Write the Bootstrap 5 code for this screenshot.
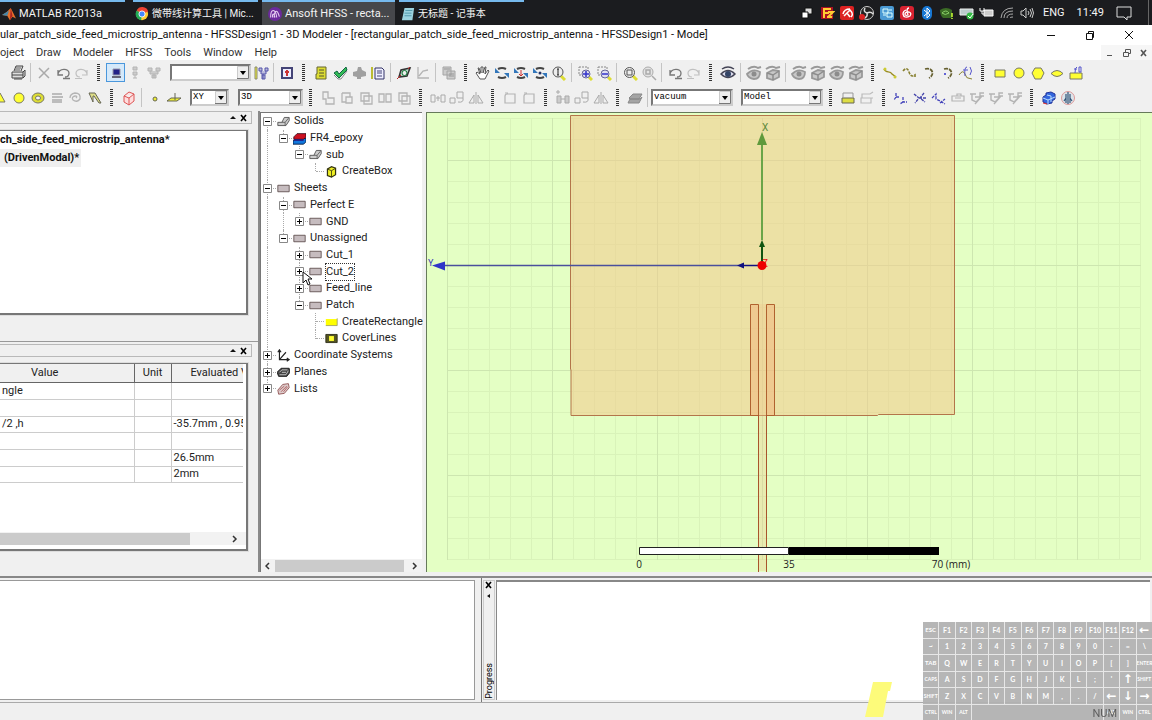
<!DOCTYPE html>
<html lang="en">
<head>
<meta charset="utf-8">
<meta name="viewport" content="width=device-width, initial-scale=1">
<title>Ansoft HFSS - 3D Modeler</title>
<link href="https://cdn.jsdelivr.net/npm/bootstrap@5.3.0/dist/css/bootstrap.min.css" rel="stylesheet">
<style>
body{font:11px/16px Roboto,"Noto Sans CJK SC",sans-serif;color:#222;background:#f0f0f0;overflow:hidden}
button{border:0;background:none;padding:0;color:inherit;font:inherit}
svg{display:block;flex:none}
.ic{width:16px;height:16px}
/* task bar */
.taskbar{height:25px;background:#1b1c1f;color:#f4f4f4}
.task{width:125px;height:25px;border-top:2px solid #76b9ed;padding-left:2px;text-align:left;gap:3px}
.task.wide{width:133px;background:#46474b;padding-left:6px}
.task .ic{width:14px;height:14px}
.task .cjk{font-size:10px}
.tray{gap:4px}
.edge{width:4px;height:25px;border-left:1px solid #666}
/* title and menus */
.titlebar,.menubar{background:#fff}
.titlebar{height:20px;color:#111}
.menubar{height:15px}
.menus{gap:12px}
.menubar a{color:#333;text-decoration:none}
.winctl{width:39px}
.mdi{width:17px;height:15px;background:#f6f6f6}
/* tool bars */
.bar{height:25px}
.bar-second{margin-left:-10px}
.tb{width:19px;height:19px;display:flex;align-items:center;justify-content:center;flex:none}
.tb.on{background:#d5e9fa;outline:1px solid #4a97dc;outline-offset:-1px}
.vsep{width:7px;height:19px;flex:none;background:linear-gradient(#c4c4c4,#c4c4c4) 3px 0/1px 100% no-repeat}
.grip{width:15px;height:18px;flex:none;background:repeating-linear-gradient(#333 0 1px,transparent 1px 2px) 6px 0/3px 100% no-repeat}
.combo{height:17px;font:9px/13px "Liberation Mono",monospace;color:#000;border:2px solid;border-color:#777 #ccc #ccc #777;border-radius:0;padding:0 14px 0 1px;appearance:none;flex:none;
background:#fff url("data:image/svg+xml,%3Csvg xmlns='http://www.w3.org/2000/svg' width='12' height='13'%3E%3Cpath d='M0 0h12v13H0z' fill='%23eee'/%3E%3Cpath d='M.5 13V.5H12' stroke='%23ccc' fill='none'/%3E%3Cpath d='M11.5 0v12.5H0' stroke='%23777' fill='none'/%3E%3Cpath d='M3 5h6l-3 4z'/%3E%3C/svg%3E") right 0 top 0 no-repeat}
.w-a{width:81px;margin:0 0 0 7px}.w-b{width:39px;margin:0 9px 0 7px}.w-c{width:65px}.w-d{width:82px;margin-right:8px}
/* docked panels */
.work{min-height:0;padding:1px 0 4px}
.dock{width:260px;border-right:2px solid #8a8a8a}
.dockhead{height:13px;width:252px;border:1px solid #b9b9b9;border-left:0;gap:4px;padding-right:3px}
.box{width:248px;background:#fff;border:2px solid #777;border-left:0;border-top-width:1px;outline:1px solid #ddd}
.proj{height:185px;margin-top:6px;font-weight:700;color:#111;line-height:18px}
.proj span{white-space:nowrap}
.drv{background:#efefef;padding:0 2px 0 4px;align-self:flex-start}
.dockline{border-bottom:1px solid #999;margin-bottom:2px}
.props{height:188px;margin-top:6px;margin-bottom:21px}
.ptable{table-layout:fixed;width:243px;border-collapse:collapse;line-height:14px}
.ptable td,.ptable th{padding:0 2px;border:1px solid #ccc;border-left:0;border-top:0;white-space:nowrap;overflow:hidden;font-weight:400}
.ptable td:last-child,.ptable th:last-child{border-right:0}
.ptable th{background:#f0f0f0;border-color:#666;text-align:center;height:18px}
.ptable th:first-child{padding-right:66px}
.ptable th.eh{text-align:left;padding-left:19px;padding-right:0}
.ptable td{height:17px}
.ptable tr:nth-child(3n) td{height:16px}
.ptable .first th:first-child{padding-left:22px}
.sbar{height:13px;background:#f2f2f2}
.thumb{height:12px;background:#cbcbcb}
.treepane{width:162px;background:#fff;border:solid #777;border-width:1px 0 0 1px;margin-top:1px}
.tree{height:284px;list-style:none;margin:0;padding:0}
.tree li{display:flex;align-items:center;min-height:0;white-space:nowrap}
.tree .ic{width:13px;height:13px;margin-right:4px}
.gd{width:16px;align-self:stretch;position:relative;flex:none}
.gd::before{content:"";position:absolute;left:6px;top:0;bottom:0;border-left:1px dotted #aaa}
.gd.no::before{display:none}
.gd.hf::before{bottom:50%}
.gd.lo::before{top:50%}
.gd.tee::after{content:"";position:absolute;left:7px;right:1px;top:8px;border-top:1px dotted #aaa}
.pm{position:absolute;left:2px;top:4px;z-index:1}
.pointer{position:absolute;left:9px;top:8px;z-index:3}
.sel{outline:1px dotted #333}
.view{border:solid #667a5a;border-width:1px 0 0 1px;margin:1px 0 0 4px;background:#e4ffc4}
.view svg{width:100%;height:100%}
/* lower panels */
.lower{height:127px;border-top:2px solid #888;border-bottom:1px solid #aaa}
.msg{width:475px;margin:2px 6px 2px 0;background:#fff;border:1px solid #999;border-left:0}
.pside{width:14px;margin-right:1px;border-left:1px solid #777;padding:2px 0 2px 1px}
.pside>div{border:1px solid #ccc}
.vtext{writing-mode:vertical-rl;transform:rotate(180deg);font-size:9px;line-height:11px;color:#000}
.prog{margin:2px 2px 2px 0;background:#fff;border:solid #888;border-width:2px 0 0 1px}
.statusbar{height:17px}
/* on-screen keyboard lies over the window */
.keys{position:fixed;right:0;bottom:0;width:229px;height:98px;display:grid;grid-template-columns:repeat(14,1fr);grid-template-rows:repeat(6,1fr);gap:1px;background:#e6e6e6;opacity:.94}
.keys button{background:#b2b2b2;color:#fff;font:700 7px/14px Lato,sans-serif;overflow:hidden;min-width:0}
.keys .xs{font-size:5px}
.keys .md{font-size:6px}
.keys .ar{font:700 12px/12px "DejaVu Sans",sans-serif}
.space{grid-column:span 8}
.flag{position:fixed;left:865px;bottom:3px}
.under{position:absolute;color:#555;right:35px;bottom:-2px}
</style>
</head>
<body class="vh-100 d-flex flex-column">

<svg width="0" height="0" class="position-absolute" aria-hidden="true">
<defs>
<symbol id="print" viewBox="0 0 16 16"><path d="M4 6l2-5h7l-2 5M2 7h11l2-2v6l-2 2H2zM2 10h11M13 7v6M4 14h8" fill="#ddd" stroke="#444"/><path d="M6 3h5M5 5h5" stroke="#666"/></symbol>
<symbol id="cut" viewBox="0 0 16 16"><path d="M3 3l10 10M13 3L3 13" stroke="#aaa" stroke-width="1.5"/></symbol>
<symbol id="undo" viewBox="0 0 16 16"><path d="M3 5v5h5M3 9c1-6 11-6 11-1 0 3-2 4-4 4M8 13.500h7" fill="none" stroke="#777" stroke-width="1.300"/></symbol>
<symbol id="redo" viewBox="0 0 16 16"><path d="M13 5v5H8M13 9C12 3 2 3 2 8c0 3 2 4 4 4M1 13.500h7" fill="none" stroke="#c0c0c0" stroke-width="1.200"/></symbol>
<symbol id="mon" viewBox="0 0 16 16"><path d="M5 4h7v6H5z" fill="#228" stroke="#99a"/><path d="M4 12h9" stroke="#667" stroke-width="2"/></symbol>
<symbol id="node" viewBox="0 0 16 16"><path d="M6 2h4v3H6zM6 7h4v3H6zM8 10v3M6 13h4" fill="#ccc" stroke="#b4b4b4"/></symbol>
<symbol id="nodes" viewBox="0 0 16 16"><path d="M2 3h4v3H2zM10 3h4v3h-4zM4 6v3h8V6M8 9v4M6 10h4v3H6z" fill="#ccc" stroke="#b4b4b4"/></symbol>
<symbol id="tune" viewBox="0 0 16 16"><path d="M2 2h2v12H2z" fill="#ee3" stroke="#887"/><path d="M6 3h3v3H6zM12 3h3v3h-3zM8 6v3h5V6M10 9v5M9 10h3v4H9z" fill="#bbd" stroke="#55a"/></symbol>
<symbol id="doc" viewBox="0 0 16 16"><path d="M3 3h10v10H3z" fill="#eef" stroke="#447" stroke-width="2"/><path d="M8 5v6M6 7h4" stroke="#c33" stroke-width="2"/></symbol>
<symbol id="list" viewBox="0 0 16 16"><path d="M4 2h9v12H3V9h1z" fill="#dd3" stroke="#663"/><path d="M6 5h5M6 8h5M6 11h5" stroke="#553"/></symbol>
<symbol id="ok" viewBox="0 0 16 16"><path d="M2 8l3-2 2 3 7-7 1 3-8 8z" fill="#3b5" stroke="#164"/><path d="M2 10l4 4h3l6-8" stroke="#888" fill="none"/></symbol>
<symbol id="club" viewBox="0 0 16 16"><path d="M7 2h3l1 3 4 2v4l-5 1v2H6v-2l-4-1V7l4-1z" fill="#a0a0a0"/></symbol>
<symbol id="rep" viewBox="0 0 16 16"><path d="M5 3h7l2 2v9H5z" fill="#eef" stroke="#336"/><path d="M2 2v12" stroke="#bb3" stroke-width="2"/><path d="M7 6h5M7 8h5M7 11h5" stroke="#447"/></symbol>
<symbol id="plate" viewBox="0 0 16 16"><path d="M3 12l2-7 9-2-3 8z" fill="#bdc" stroke="#333" stroke-width="1.500"/><circle cx="8.500" cy="8" r="2.500" fill="#eee" stroke="#173"/><path d="M1 14l4-4M12 4l2-2" stroke="#b22"/></symbol>
<symbol id="graph" viewBox="0 0 16 16"><path d="M3 2v11h11M4 11l4-5 5-1" fill="none" stroke="#b4b4b4" stroke-width="1.300"/></symbol>
<symbol id="copy" viewBox="0 0 16 16"><path d="M2 2h8v8H2zM6 6h8v8H6z" fill="#ccc" stroke="#a4a4a4"/><path d="M3 4h6M8 9h5M8 11h5" stroke="#999"/></symbol>
<symbol id="hand" viewBox="0 0 16 16"><path d="M5 14L1 8l1-1 3 2-2-6h1l2 5V2h2v6l2-6h1l-1 7 3-4 1 1-4 8z" fill="#fff" stroke="#555"/></symbol>
<symbol id="rot" viewBox="0 0 16 16"><path d="M4 4q4-2 8 0M12 12q-4 2-8 0" fill="none" stroke="#444" stroke-width="2.200"/><path d="M1 3v5h5zM15 13V8h-5z" fill="#37b"/></symbol>
<symbol id="rotx" viewBox="0 0 16 16"><use href="#rot"/><path d="M8 5v6M6 9l2 2 2-2" stroke="#c33" fill="none"/></symbol>
<symbol id="roty" viewBox="0 0 16 16"><use href="#rot"/><circle cx="8" cy="8" r="1.500" fill="#236"/></symbol>
<symbol id="zi" viewBox="0 0 16 16"><path d="M10 11l4 4" stroke="#dd3" stroke-width="3"/><circle cx="7" cy="7" r="5" fill="#eee" stroke="#555"/><path d="M7 4v6M6 4h2M6 10h2" stroke="#222"/></symbol>
<symbol id="zp" viewBox="0 0 16 16"><path d="M12 12l3 3" stroke="#dd3" stroke-width="3"/><path d="M2 2h9v8H2z" fill="none" stroke="#888" stroke-dasharray="2 1"/><circle cx="9" cy="9" r="4" fill="#dde" stroke="#669"/><path d="M9 6v6M6 9h6" stroke="#33c" stroke-width="1.500"/></symbol>
<symbol id="zm" viewBox="0 0 16 16"><path d="M12 12l3 3" stroke="#dd3" stroke-width="3"/><path d="M2 2h9v8H2z" fill="none" stroke="#888" stroke-dasharray="2 1"/><circle cx="9" cy="9" r="4" fill="#dde" stroke="#669"/><path d="M6 9h6" stroke="#33c" stroke-width="1.500"/></symbol>
<symbol id="zf" viewBox="0 0 16 16"><path d="M11 11l4 4" stroke="#dd3" stroke-width="3"/><circle cx="7.500" cy="7.500" r="5" fill="#eee" stroke="#555"/><path d="M5 5h5v5H5z" fill="none" stroke="#555"/></symbol>
<symbol id="zg" viewBox="0 0 16 16"><circle cx="7" cy="7" r="5" fill="#e4e4e4" stroke="#aaa"/><path d="M5 5h4v4H5zM11 11l4 4" fill="none" stroke="#aaa" stroke-width="1.500"/></symbol>
<symbol id="eye" viewBox="0 0 16 16"><path d="M2 4q6-4 12 0" fill="none" stroke="#445" stroke-width="1.500"/><path d="M1 9q7-7 14 0-7 7-14 0z" fill="#dde" stroke="#445" stroke-width="1.500"/><circle cx="8" cy="9" r="3" fill="#346"/></symbol>
<symbol id="eg" viewBox="0 0 16 16"><path d="M2 4q6-4 10-1l3-1" fill="none" stroke="#999" stroke-width="2"/><path d="M1 9q6-6 13-2 0 7-6 7-6-1-7-5z" fill="#c8c8c8" stroke="#999" stroke-width="1.800"/><circle cx="8" cy="9" r="2.500" fill="#8c8c8c"/></symbol>
<symbol id="ebox" viewBox="0 0 16 16"><path d="M1 4q6-4 10-1l4-1" fill="none" stroke="#999" stroke-width="2"/><path d="M2 8l6-3 6 1v6l-6 3-6-2z" fill="#c8c8c8" stroke="#999" stroke-width="1.800"/><path d="M2 8l6 2 6-4M8 10v5" stroke="#8c8c8c" fill="none" stroke-width="1.500"/></symbol>
<symbol id="ln" viewBox="0 0 16 16"><path d="M2 4c2 5 6 1 8 5l4 3" fill="none" stroke="#998c20" stroke-width="1.400"/><circle cx="3" cy="4" r="1.500" fill="#cc3"/><circle cx="13" cy="12" r="1.500" fill="#cc3"/></symbol>
<symbol id="sp" viewBox="0 0 16 16"><path d="M2 6q4-5 6 1t6 3v2" fill="none" stroke="#888030" stroke-width="1.600" stroke-dasharray="3 1"/></symbol>
<symbol id="arc" viewBox="0 0 16 16"><path d="M5 4c8-2 10 6 4 9" fill="none" stroke="#666030" stroke-width="1.800" stroke-dasharray="4 1"/></symbol>
<symbol id="arcd" viewBox="0 0 16 16"><use href="#arc"/><circle cx="6" cy="9" r="1" fill="#33c"/></symbol>
<symbol id="eq" viewBox="0 0 16 16"><path d="M1 10q4-6 6-1t3 4l4 1" fill="none" stroke="#888030"/><path d="M9 2q-3 0-2 9M5 5h5M12 2q3 4 0 8" fill="none" stroke="#55c"/></symbol>
<symbol id="rect" viewBox="0 0 16 16"><path d="M3 5h10v7H3z" fill="#ff3" stroke="#776"/></symbol>
<symbol id="circ" viewBox="0 0 16 16"><circle cx="8" cy="8" r="5" fill="#ff3" stroke="#776"/></symbol>
<symbol id="poly" viewBox="0 0 16 16"><path d="M5 3h6l3 5-3 6H5L2 8z" fill="#ff3" stroke="#776"/></symbol>
<symbol id="elli" viewBox="0 0 16 16"><path d="M2 8.500q6-6 12 0-6 6-12 0z" fill="#ff3" stroke="#776"/></symbol>
<symbol id="eqs" viewBox="0 0 16 16"><path d="M2 8h12v6H2z" fill="#ff3" stroke="#776"/><path d="M9 2q-2 0-2 6M6 4h3M11 2v5h2V2z" fill="none" stroke="#55c"/></symbol>
<symbol id="tri" viewBox="0 0 16 16"><path d="M8 3l5 9H3z" fill="#ff3" stroke="#776"/></symbol>
<symbol id="torus" viewBox="0 0 16 16"><ellipse cx="8" cy="8" rx="6" ry="5" fill="#dd3" stroke="#776"/><ellipse cx="8" cy="8" rx="2.500" ry="2" fill="#f4f4f4" stroke="#776"/></symbol>
<symbol id="helix" viewBox="0 0 16 16"><path d="M3 4h10M3 7h11M3 10h10M3 12h10" stroke="#aaa" stroke-width="1.500"/></symbol>
<symbol id="spir" viewBox="0 0 16 16"><path d="M8 8q2-2-1-2-4 1-2 4 4 3 7-1 1-6-5-6-5 1-5 5" fill="none" stroke="#b4b4b4" stroke-width="1.300"/></symbol>
<symbol id="bond" viewBox="0 0 16 16"><path d="M2 3h6l6 10h-2L7 6H6v6z" fill="#dd8" stroke="#665"/></symbol>
<symbol id="reg" viewBox="0 0 16 16"><path d="M3 6l5-4 5 2v7l-5 4-5-3zM3 6l5 2 5-4M8 8v7" fill="#fdd" stroke="#d55"/></symbol>
<symbol id="pt" viewBox="0 0 16 16"><circle cx="8" cy="9" r="2" fill="#ee3" stroke="#665"/></symbol>
<symbol id="pln" viewBox="0 0 16 16"><path d="M1 11l4-3h10l-4 3z" fill="#ee3" stroke="#665"/><path d="M9 3v7" stroke="#665"/></symbol>
<symbol id="b1" viewBox="0 0 16 16"><path d="M3 2h5v6h6v6H6V9H3z" fill="none" stroke="#b4b4b4" stroke-width="1.300"/></symbol>
<symbol id="b2" viewBox="0 0 16 16"><path d="M3 3h8v4M3 3v9h4M7 7h6v6H7z" fill="none" stroke="#b4b4b4" stroke-width="1.300"/></symbol>
<symbol id="b3" viewBox="0 0 16 16"><path d="M3 3h8v8H3zM6 6h8v8H6z" fill="none" stroke="#b4b4b4" stroke-width="1.300"/></symbol>
<symbol id="b4" viewBox="0 0 16 16"><path d="M2 4h5v8H2zM9 4h5v8H9z" fill="none" stroke="#b4b4b4" stroke-width="1.300"/></symbol>
<symbol id="mv" viewBox="0 0 16 16"><path d="M1 5h4v7H1zM11 5h4v7h-4zM6 8h4M8 6v5" fill="none" stroke="#aaa"/></symbol>
<symbol id="mr" viewBox="0 0 16 16"><path d="M1 8h5v5H1zM8 2h6v6H8zM9 12q6 1 5-4" fill="none" stroke="#aaa"/></symbol>
<symbol id="mm" viewBox="0 0 16 16"><path d="M1 13l5-8v8zM15 13l-5-8v8zM8 2v12" fill="none" stroke="#aaa"/></symbol>
<symbol id="dv" viewBox="0 0 16 16"><path d="M2 6h4v7H2zM10 6h4v7h-4zM6 9h4M1 2h4M3 0v4" fill="#ccc" stroke="#aaa"/></symbol>
<symbol id="fil" viewBox="0 0 16 16"><path d="M3 13V6q0-2 3-2h7v9zM3 3h3" fill="none" stroke="#b4b4b4" stroke-width="1.200"/></symbol>
<symbol id="lay" viewBox="0 0 16 16"><path d="M2 8l4-4h9l-3 5H3zM1 13l2-4h10l2-2-3 6z" fill="#a4a4a4" stroke="#888"/></symbol>
<symbol id="by" viewBox="0 0 16 16"><path d="M2 8h12v5H2z" fill="#dd4" stroke="#665"/><path d="M3 8V3h10v5" fill="none" stroke="#999"/></symbol>
<symbol id="bg" viewBox="0 0 16 16"><path d="M2 8h10v5H2zM3 8V4h8l3-2M8 8h6" fill="none" stroke="#bbb" stroke-width="1.200"/></symbol>
<symbol id="c1" viewBox="0 0 16 16"><path d="M3 3v4h4M3 7l-2 3M10 7v5h4M10 12l-3 2" fill="none" stroke="#44b" stroke-width="1.300" stroke-dasharray="3 1"/></symbol>
<symbol id="c2" viewBox="0 0 16 16"><path d="M2 4l5 4-4 5M7 8h7M12 3L8 8l5 4" fill="none" stroke="#44a" stroke-width="1.300" stroke-dasharray="3 1"/></symbol>
<symbol id="c3" viewBox="0 0 16 16"><path d="M1 8l4-4v5l4 2 5 3M9 13l5-4" fill="none" stroke="#44b" stroke-width="1.300" stroke-dasharray="3 1"/></symbol>
<symbol id="c4" viewBox="0 0 16 16"><path d="M2 6h12v5H2zM5 8h6M7 6V4h4v2" fill="none" stroke="#b4b4b4" stroke-width="1.200"/></symbol>
<symbol id="c5" viewBox="0 0 16 16"><path d="M1 4h6M3 4v6l4 2 4-4V3h4M6 7h5M11 6h4M6 14l7-8" fill="none" stroke="#b4b4b4" stroke-width="1.400"/></symbol>
<symbol id="bl" viewBox="0 0 16 16"><path d="M2 7l3-2V3l5-1 4 2v5l-3 2v2l-5 1-4-2z" fill="#36d" stroke="#239"/><path d="M2 8l5 2v4M7 10l7-3M6 5l4 1v6" stroke="#bdf" fill="none"/><path d="M2 13l4 1" stroke="#d33"/></symbol>
<symbol id="ant" viewBox="0 0 16 16"><circle cx="8" cy="8" r="6.500" fill="#dde4ea" stroke="#d99"/><path d="M8 2v12M6 4v9M10 4v9M4 11l2-3M12 11l-2-3" stroke="#357" stroke-width="1.200"/></symbol>
<symbol id="solid" viewBox="0 0 16 16"><path d="M1 13V9h5l3-6h6v4l-4 6z" fill="#ccc" stroke="#444"/><path d="M6 9h4l4-5M10 9v4" fill="none" stroke="#555"/></symbol>
<symbol id="mat" viewBox="0 0 16 16"><path d="M0 11l4-3h12v4l-3 3H0z" fill="#17d" stroke="#013"/><path d="M1 6l4-4h11v4l-3 3H1z" fill="#c12" stroke="#301"/><path d="M1 10h12" stroke="#228" stroke-width="2"/></symbol>
<symbol id="cbox" viewBox="0 0 16 16"><path d="M3 5l5-3 5 2v8l-5 3-5-2z" fill="#ee2" stroke="#331" stroke-width="1.500"/><path d="M3 5l5 2 5-3M8 7v8" stroke="#331" fill="none"/></symbol>
<symbol id="sheet" viewBox="0 0 16 16"><path d="M1 4h14v8H1z" fill="#c6bcbf" stroke="#544"/></symbol>
<symbol id="crect" viewBox="0 0 16 16"><path d="M1 13V5h14v8z" fill="#ff0"/><path d="M1 13h14V4" stroke="#996" fill="none"/></symbol>
<symbol id="cover" viewBox="0 0 16 16"><path d="M1 3h14v10H1z" fill="#552" stroke="#221"/><path d="M5 5h6v6H5z" fill="#ff3"/></symbol>
<symbol id="cs" viewBox="0 0 16 16"><path d="M3 1v12h12M3 13l8-9M1 4l2-3 2 3M12 11l3 2-3 2" fill="none" stroke="#222" stroke-width="1.400"/></symbol>
<symbol id="planes" viewBox="0 0 16 16"><path d="M0 9l5-5h10l1 5-4 5H2z" fill="#444" stroke="#111"/><path d="M3 9l3-3h7M3 12h8l3-5M6 9h5" stroke="#ddd" fill="none"/></symbol>
<symbol id="lists" viewBox="0 0 16 16"><path d="M1 10l6-7 7-1 1 5-6 7-7 1z" fill="#dcc" stroke="#844"/><path d="M3 10l6-5M5 12l7-7M8 12l5-6" stroke="#a55"/></symbol>
<symbol id="plus" viewBox="0 0 9 9"><path d="M.5.5h8v8h-8z" fill="#fff" stroke="#888"/><path d="M2 4.500h5M4.500 2v5" stroke="#000"/></symbol>
<symbol id="minus" viewBox="0 0 9 9"><path d="M.5.5h8v8h-8z" fill="#fff" stroke="#888"/><path d="M2 4.500h5" stroke="#000"/></symbol>
<symbol id="up" viewBox="0 0 6 8"><path d="M0 5l3-3 3 3z" fill="#111"/></symbol>
<symbol id="x" viewBox="0 0 8 8"><path d="M1 1l5 6M6 1L1 7" stroke="#000" stroke-width="1.600"/></symbol>
</defs>
</svg>

<header class="taskbar d-flex align-items-center">
  <button class="task d-flex align-items-center me-2"><svg class="ic" viewBox="0 0 16 16"><path d="M0 9l5-3 5-5 6 12-4-2-3 4-3-5z" fill="#e8702a"/><path d="M0 9l5-3 3-2-2 6z" fill="#48a"/><path d="M10 1l2 9-3 5z" fill="#a22"/></svg>MATLAB R2013a</button>
  <button class="task d-flex align-items-center me-1"><svg class="ic" viewBox="0 0 16 16"><circle cx="8" cy="8" r="7" fill="#fc3"/><path d="M8 8L2 4a7 7 0 0 1 13 1z" fill="#e43"/><path d="M8 8l-1 7A7 7 0 0 1 2 4z" fill="#2a5"/><circle cx="8" cy="8" r="3.500" fill="#48f" stroke="#fff"/></svg><span class="cjk text-nowrap">微带线计算工具 | Mic...</span></button>
  <button class="task wide d-flex align-items-center me-1"><svg class="ic" viewBox="0 0 16 16"><circle cx="8" cy="8" r="8" fill="#6b2a9c"/><path d="M3 12q0-8 3-8t4 8M7 12q0-6 2-7t4 6M5 12q0-4 1-4t2 4" fill="none" stroke="#e9d4f4" stroke-width="1.200"/></svg><span class="text-nowrap">Ansoft HFSS - recta...</span></button>
  <button class="task d-flex align-items-center"><svg class="ic" viewBox="0 0 16 16"><path d="M4 1h11l-2 14H1z" fill="#9cd3e0"/><path d="M5 4h8M4 7h8M4 10h8" stroke="#4b93a8"/></svg><span class="cjk">无标题 - 记事本</span></button>
  <div class="tray ms-auto d-flex align-items-center">
    <svg class="ic" viewBox="0 0 16 16"><path d="M6 3h7v6H6z" fill="#ddd" stroke="#111"/><path d="M3 7h6v6H3z" fill="#fff" stroke="#111"/></svg>
    <svg class="ic" viewBox="0 0 16 16"><path d="M2 2h12v12H2z" fill="#a12"/><path d="M12 4H5v9M5 8h5M8 12h5l-3-1 4-4H9" fill="none" stroke="#fc3" stroke-width="2"/></svg>
    <svg class="ic" viewBox="0 0 16 16"><rect x="1" y="1" width="14" height="14" rx="2" fill="#d22"/><path d="M4 9q1-5 7-5M5 11l6-6q4 4 1 7M8 8l3 4" fill="none" stroke="#fff" stroke-width="1.500"/></svg>
    <svg class="ic" viewBox="0 0 16 16"><circle cx="8" cy="8" r="6.500" fill="#222" stroke="#ccc"/><path d="M8 8q-4-1-2-5M8 8q4-2 6 1M8 8q1 4-3 5" stroke="#ddd" fill="none" stroke-width="1.500"/><circle cx="3" cy="12" r="3" fill="#d22"/></svg>
    <svg class="ic" viewBox="0 0 16 16"><rect x="1" y="1" width="14" height="14" rx="2" fill="#4a9ad4"/><path d="M4 4h5v4H4zM8 8h5v4H8zM4 10h3M10 5h3" stroke="#dff" fill="none"/></svg>
    <svg class="ic" viewBox="0 0 16 16"><rect x="1" y="1" width="14" height="14" rx="3" fill="#d92230"/><path d="M10 3q-2 0-2 3l1 4q-3 1-3-1t4-2q3 1 1 4-6 3-7-2 0-3 3-4" fill="none" stroke="#fff" stroke-width="1.300"/></svg>
    <svg class="ic" viewBox="0 0 16 16"><rect x="3" y="1" width="10" height="14" rx="5" fill="#1878d4"/><path d="M5 5l6 5-3 3V3l3 3-6 5" fill="none" stroke="#fff"/></svg>
    <svg class="ic" viewBox="0 0 16 16"><path d="M1 5q6-4 12 0v8H4q-3-3-3-8z" fill="#3b6b25"/><path d="M3 8q4-4 7 0-4 3-7 0" fill="none" stroke="#8c6"/><path d="M13 8v4M13 13v1" stroke="#cf3" stroke-width="1.500"/></svg>
    <svg class="ic" viewBox="0 0 16 16"><path d="M1 4h13v6H1z" fill="#bcc" stroke="#eee"/><circle cx="11" cy="11" r="3.500" fill="#3b4"/><path d="M9 11l2 2 3-4" stroke="#fff" fill="none"/></svg>
    <svg class="ic" viewBox="0 0 16 16"><path d="M5 5h9v6H5z" fill="#ccc" stroke="#fff"/><path d="M1 3v3h4V3M3 6v3h2" stroke="#fff" fill="none"/></svg>
    <svg class="ic" viewBox="0 0 16 16"><path d="M2 13Q3 3 14 3M5 13q0-7 9-7M8 13q0-4 6-4M11 13q0-1 3-1" stroke="#aaa" fill="none"/></svg>
    <svg class="ic" viewBox="0 0 16 16"><path d="M2 6h2l3-3v10l-3-3H2zM9 6q2 2 0 4M11 4q3 4 0 8M13 3q3 5 0 10" stroke="#ccc" fill="none"/></svg>
    <span class="ms-1">ENG</span><span class="ms-2">11:49</span>
    <svg class="ic ms-2 me-3" viewBox="0 0 16 16"><path d="M1 2h14v10h-4v3l-3-3H1z" fill="none" stroke="#ddd"/></svg>
  </div>
  <div class="edge"></div>
</header>

<div class="titlebar d-flex align-items-center">
  <span class="text-nowrap">ular_patch_side_feed_microstrip_antenna - HFSSDesign1 - 3D Modeler - [rectangular_patch_side_feed_microstrip_antenna - HFSSDesign1 - Mode]</span>
  <div class="ms-auto me-1 d-flex">
    <button class="winctl d-flex justify-content-center" aria-label="Minimize"><svg width="10" height="10"><path d="M1 5.500h8" stroke="#111"/></svg></button>
    <button class="winctl d-flex justify-content-center" aria-label="Restore"><svg width="10" height="10"><path d="M1.500 3.500h6v6h-6zM3.500 3V1.500h5v6H8" fill="none" stroke="#111"/></svg></button>
    <button class="winctl d-flex justify-content-center" aria-label="Close"><svg width="10" height="10"><path d="M1 1l8 8M9 1L1 9" stroke="#111"/></svg></button>
  </div>
</div>
<nav class="menubar d-flex align-items-center">
  <div class="d-flex menus"><a href="#">oject</a><a href="#">Draw</a><a href="#">Modeler</a><a href="#">HFSS</a><a href="#">Tools</a><a href="#">Window</a><a href="#">Help</a></div>
  <div class="ms-auto d-flex">
    <button class="mdi d-flex justify-content-center align-items-center" aria-label="Minimize design"><svg width="8" height="8"><path d="M1 6.500h5" stroke="#555"/></svg></button>
    <button class="mdi d-flex justify-content-center align-items-center" aria-label="Restore design"><svg width="8" height="8"><path d="M.5 3.500h5v4h-5zM2.500 3V.500h5v4H6" fill="none" stroke="#555"/></svg></button>
    <button class="mdi d-flex justify-content-center align-items-center" aria-label="Close design"><svg width="8" height="8"><path d="M1 1l5 6M6 1L1 7" stroke="#555" stroke-width="1.600"/></svg></button>
  </div>
</nav>

<div class="bar d-flex align-items-center ps-2" role="toolbar" aria-label="Standard">
<button class="tb" aria-label="Print"><svg class="ic"><use href="#print"/></svg></button><i class="vsep"></i>
<button class="tb" aria-label="Delete"><svg class="ic"><use href="#cut"/></svg></button>
<button class="tb" aria-label="Undo"><svg class="ic"><use href="#undo"/></svg></button>
<button class="tb" aria-label="Redo"><svg class="ic"><use href="#redo"/></svg></button><i class="grip"></i>
<button class="tb on" aria-label="Local machine"><svg class="ic"><use href="#mon"/></svg></button>
<button class="tb" aria-label="Remote"><svg class="ic"><use href="#node"/></svg></button>
<button class="tb" aria-label="Distributed"><svg class="ic"><use href="#nodes"/></svg></button>
<select class="combo w-a" aria-label="Machine"><option></option></select>
<button class="tb" aria-label="Configure"><svg class="ic"><use href="#tune"/></svg></button><i class="vsep"></i>
<button class="tb" aria-label="Profile"><svg class="ic"><use href="#doc"/></svg></button><i class="grip"></i>
<button class="tb" aria-label="Properties"><svg class="ic"><use href="#list"/></svg></button>
<button class="tb" aria-label="Validate"><svg class="ic"><use href="#ok"/></svg></button>
<button class="tb" aria-label="Analyze"><svg class="ic"><use href="#club"/></svg></button>
<button class="tb" aria-label="Report"><svg class="ic"><use href="#rep"/></svg></button><i class="vsep"></i>
<button class="tb" aria-label="Fields"><svg class="ic"><use href="#plate"/></svg></button>
<button class="tb" aria-label="Graph"><svg class="ic"><use href="#graph"/></svg></button><i class="vsep"></i>
<button class="tb" aria-label="Copy image"><svg class="ic"><use href="#copy"/></svg></button><i class="grip"></i>
<button class="tb" aria-label="Pan"><svg class="ic"><use href="#hand"/></svg></button>
<button class="tb" aria-label="Rotate"><svg class="ic"><use href="#rot"/></svg></button>
<button class="tb" aria-label="Rotate axis"><svg class="ic"><use href="#rotx"/></svg></button>
<button class="tb" aria-label="Rotate screen"><svg class="ic"><use href="#roty"/></svg></button>
<button class="tb" aria-label="Zoom"><svg class="ic"><use href="#zi"/></svg></button><i class="vsep"></i>
<button class="tb" aria-label="Zoom in"><svg class="ic"><use href="#zp"/></svg></button>
<button class="tb" aria-label="Zoom out"><svg class="ic"><use href="#zm"/></svg></button><i class="vsep"></i>
<button class="tb" aria-label="Fit all"><svg class="ic"><use href="#zf"/></svg></button>
<button class="tb" aria-label="Fit selection"><svg class="ic"><use href="#zg"/></svg></button><i class="vsep"></i>
<button class="tb" aria-label="Previous view"><svg class="ic"><use href="#undo"/></svg></button>
<button class="tb" aria-label="Next view"><svg class="ic"><use href="#redo"/></svg></button><i class="grip"></i>
<button class="tb" aria-label="Visibility"><svg class="ic"><use href="#eye"/></svg></button><i class="vsep"></i>
<button class="tb" aria-label="Hide"><svg class="ic"><use href="#eg"/></svg></button>
<button class="tb" aria-label="Hide all"><svg class="ic"><use href="#ebox"/></svg></button><i class="vsep"></i>
<button class="tb" aria-label="Show"><svg class="ic"><use href="#eg"/></svg></button>
<button class="tb" aria-label="Show all"><svg class="ic"><use href="#ebox"/></svg></button>
<button class="tb" aria-label="Show view"><svg class="ic"><use href="#eg"/></svg></button>
<button class="tb" aria-label="Show views"><svg class="ic"><use href="#ebox"/></svg></button><i class="grip"></i>
<button class="tb" aria-label="Line"><svg class="ic"><use href="#ln"/></svg></button>
<button class="tb" aria-label="Spline"><svg class="ic"><use href="#sp"/></svg></button>
<button class="tb" aria-label="Arc"><svg class="ic"><use href="#arc"/></svg></button>
<button class="tb" aria-label="Center arc"><svg class="ic"><use href="#arcd"/></svg></button>
<button class="tb" aria-label="Equation curve"><svg class="ic"><use href="#eq"/></svg></button><i class="grip"></i>
<button class="tb" aria-label="Rectangle"><svg class="ic"><use href="#rect"/></svg></button>
<button class="tb" aria-label="Circle"><svg class="ic"><use href="#circ"/></svg></button>
<button class="tb" aria-label="Polygon"><svg class="ic"><use href="#poly"/></svg></button>
<button class="tb" aria-label="Ellipse"><svg class="ic"><use href="#elli"/></svg></button>
<button class="tb" aria-label="Equation surface"><svg class="ic"><use href="#eqs"/></svg></button>
</div>
<div class="bar bar-second d-flex align-items-center" role="toolbar" aria-label="Modeling">
<button class="tb" aria-label="Cone"><svg class="ic"><use href="#tri"/></svg></button>
<button class="tb" aria-label="Sphere"><svg class="ic"><use href="#circ"/></svg></button>
<button class="tb" aria-label="Torus"><svg class="ic"><use href="#torus"/></svg></button>
<button class="tb" aria-label="Helix"><svg class="ic"><use href="#helix"/></svg></button>
<button class="tb" aria-label="Spiral"><svg class="ic"><use href="#spir"/></svg></button>
<button class="tb" aria-label="Bondwire"><svg class="ic"><use href="#bond"/></svg></button><i class="grip"></i>
<button class="tb" aria-label="Region"><svg class="ic"><use href="#reg"/></svg></button><i class="vsep"></i>
<button class="tb" aria-label="Point"><svg class="ic"><use href="#pt"/></svg></button>
<button class="tb" aria-label="Plane"><svg class="ic"><use href="#pln"/></svg></button>
<select class="combo w-b" aria-label="Drawing plane"><option>XY</option></select>
<select class="combo w-c" aria-label="Movement mode"><option>3D</option></select><i class="grip"></i>
<button class="tb" aria-label="Unite"><svg class="ic"><use href="#b1"/></svg></button>
<button class="tb" aria-label="Subtract"><svg class="ic"><use href="#b2"/></svg></button>
<button class="tb" aria-label="Intersect"><svg class="ic"><use href="#b3"/></svg></button>
<button class="tb" aria-label="Split"><svg class="ic"><use href="#b4"/></svg></button>
<button class="tb" aria-label="Imprint"><svg class="ic"><use href="#b3"/></svg></button><i class="grip"></i>
<button class="tb" aria-label="Move"><svg class="ic"><use href="#mv"/></svg></button>
<button class="tb" aria-label="Rotate object"><svg class="ic"><use href="#mr"/></svg></button>
<button class="tb" aria-label="Mirror"><svg class="ic"><use href="#mm"/></svg></button><i class="grip"></i>
<button class="tb" aria-label="Fillet"><svg class="ic"><use href="#fil"/></svg></button>
<button class="tb" aria-label="Chamfer"><svg class="ic"><use href="#fil"/></svg></button><i class="grip"></i>
<button class="tb" aria-label="Duplicate along line"><svg class="ic"><use href="#dv"/></svg></button>
<button class="tb" aria-label="Duplicate around axis"><svg class="ic"><use href="#mr"/></svg></button>
<button class="tb" aria-label="Duplicate mirror"><svg class="ic"><use href="#mm"/></svg></button><i class="grip"></i>
<button class="tb" aria-label="Sheet layers"><svg class="ic"><use href="#lay"/></svg></button><i class="vsep"></i>
<select class="combo w-d" aria-label="Material"><option>vacuum</option></select>
<select class="combo w-d me-0" aria-label="Model type"><option>Model</option></select><i class="grip"></i>
<button class="tb" aria-label="Section"><svg class="ic"><use href="#by"/></svg></button>
<button class="tb" aria-label="Cover"><svg class="ic"><use href="#bg"/></svg></button><i class="grip"></i>
<button class="tb" aria-label="Relative offset"><svg class="ic"><use href="#c1"/></svg></button>
<button class="tb" aria-label="Relative rotated"><svg class="ic"><use href="#c2"/></svg></button>
<button class="tb" aria-label="Relative both"><svg class="ic"><use href="#c3"/></svg></button>
<button class="tb" aria-label="Face system"><svg class="ic"><use href="#c4"/></svg></button>
<button class="tb" aria-label="Object offset"><svg class="ic"><use href="#c5"/></svg></button>
<button class="tb" aria-label="Object rotated"><svg class="ic"><use href="#c5"/></svg></button>
<button class="tb" aria-label="Object both"><svg class="ic"><use href="#c5"/></svg></button><i class="grip"></i>
<button class="tb" aria-label="Boundary display"><svg class="ic"><use href="#bl"/></svg></button>
<button class="tb" aria-label="Radiation"><svg class="ic"><use href="#ant"/></svg></button>
</div>

<main class="work flex-grow-1 d-flex">
  <section class="dock d-flex flex-column flex-shrink-0">
    <div class="dockhead d-flex align-items-center justify-content-end">
      <button aria-label="Collapse project"><svg width="6" height="8"><use href="#up"/></svg></button><button aria-label="Close project"><svg width="8" height="8"><use href="#x"/></svg></button>
    </div>
    <div class="box proj d-flex flex-column overflow-hidden"><span>ch_side_feed_microstrip_antenna*</span><span class="drv">(DrivenModal)*</span></div>
    <div class="dockline flex-grow-1"></div>
    <div class="dockhead d-flex align-items-center justify-content-end">
      <button aria-label="Collapse properties"><svg width="6" height="8"><use href="#up"/></svg></button><button aria-label="Close properties"><svg width="8" height="8"><use href="#x"/></svg></button>
    </div>
    <div class="box props d-flex flex-column">
      <table class="ptable">
        <colgroup><col style="width:134px"><col style="width:37px"><col></colgroup>
        <thead><tr class="first"><th>Value</th><th>Unit</th><th class="eh">Evaluated V</th></tr></thead>
        <tbody>
          <tr><td>ngle</td><td></td><td></td></tr>
          <tr><td></td><td></td><td></td></tr>
          <tr><td>/2 ,h</td><td></td><td>-35.7mm , 0.95</td></tr>
          <tr><td></td><td></td><td></td></tr>
          <tr><td></td><td></td><td>26.5mm</td></tr>
          <tr><td></td><td></td><td>2mm</td></tr>
        </tbody>
      </table>
      <div class="sbar mt-auto mb-1 d-flex align-items-center justify-content-between pe-2"><div class="thumb" style="width:190px"></div><svg width="6" height="8"><path d="M1 1l3 3-3 3" fill="none" stroke="#333" stroke-width="1.500"/></svg></div>
    </div>
  </section>

  <section class="treepane d-flex flex-column flex-shrink-0">
    <ul class="tree d-flex flex-column">
      <li class="flex-fill"><span class="gd lo tee"><svg class="pm" width="9" height="9"><use href="#minus"/></svg></span><svg class="ic"><use href="#solid"/></svg>Solids</li>
      <li class="flex-fill"><span class="gd"></span><span class="gd hf tee"><svg class="pm" width="9" height="9"><use href="#minus"/></svg></span><svg class="ic"><use href="#mat"/></svg>FR4_epoxy</li>
      <li class="flex-fill"><span class="gd"></span><span class="gd no"></span><span class="gd hf tee"><svg class="pm" width="9" height="9"><use href="#minus"/></svg></span><svg class="ic"><use href="#solid"/></svg>sub</li>
      <li class="flex-fill"><span class="gd"></span><span class="gd no"></span><span class="gd no"></span><span class="gd hf tee"></span><svg class="ic"><use href="#cbox"/></svg>CreateBox</li>
      <li class="flex-fill"><span class="gd tee"><svg class="pm" width="9" height="9"><use href="#minus"/></svg></span><svg class="ic"><use href="#sheet"/></svg>Sheets</li>
      <li class="flex-fill"><span class="gd"></span><span class="gd tee"><svg class="pm" width="9" height="9"><use href="#minus"/></svg></span><svg class="ic"><use href="#sheet"/></svg>Perfect E</li>
      <li class="flex-fill"><span class="gd"></span><span class="gd"></span><span class="gd hf tee"><svg class="pm" width="9" height="9"><use href="#plus"/></svg></span><svg class="ic"><use href="#sheet"/></svg>GND</li>
      <li class="flex-fill"><span class="gd"></span><span class="gd hf tee"><svg class="pm" width="9" height="9"><use href="#minus"/></svg></span><svg class="ic"><use href="#sheet"/></svg>Unassigned</li>
      <li class="flex-fill"><span class="gd"></span><span class="gd no"></span><span class="gd tee"><svg class="pm" width="9" height="9"><use href="#plus"/></svg></span><svg class="ic"><use href="#sheet"/></svg>Cut_1</li>
      <li class="flex-fill"><span class="gd"></span><span class="gd no"></span><span class="gd tee"><svg class="pm" width="9" height="9"><use href="#plus"/></svg><svg class="pointer" width="10" height="15"><path d="M1 1v11l3-3 2 5 2-1-2-5h4z" fill="#fff" stroke="#111"/></svg></span><svg class="ic"><use href="#sheet"/></svg><span class="sel">Cut_2</span></li>
      <li class="flex-fill"><span class="gd"></span><span class="gd no"></span><span class="gd tee"><svg class="pm" width="9" height="9"><use href="#plus"/></svg></span><svg class="ic"><use href="#sheet"/></svg>Feed_line</li>
      <li class="flex-fill"><span class="gd"></span><span class="gd no"></span><span class="gd hf tee"><svg class="pm" width="9" height="9"><use href="#minus"/></svg></span><svg class="ic"><use href="#sheet"/></svg>Patch</li>
      <li class="flex-fill"><span class="gd"></span><span class="gd no"></span><span class="gd no"></span><span class="gd tee"></span><svg class="ic"><use href="#crect"/></svg>CreateRectangle</li>
      <li class="flex-fill"><span class="gd"></span><span class="gd no"></span><span class="gd no"></span><span class="gd hf tee"></span><svg class="ic"><use href="#cover"/></svg>CoverLines</li>
      <li class="flex-fill"><span class="gd tee"><svg class="pm" width="9" height="9"><use href="#plus"/></svg></span><svg class="ic"><use href="#cs"/></svg>Coordinate Systems</li>
      <li class="flex-fill"><span class="gd tee"><svg class="pm" width="9" height="9"><use href="#plus"/></svg></span><svg class="ic"><use href="#planes"/></svg>Planes</li>
      <li class="flex-fill"><span class="gd hf tee"><svg class="pm" width="9" height="9"><use href="#plus"/></svg></span><svg class="ic"><use href="#lists"/></svg>Lists</li>
    </ul>
    <div class="sbar mt-auto d-flex align-items-center gap-1 px-1"><svg width="6" height="8"><path d="M4 1L1 4l3 3" fill="none" stroke="#333" stroke-width="1.500"/></svg><div class="thumb flex-grow-1"></div><svg width="10" height="8"><path d="M5 1l3 3-3 3" fill="none" stroke="#333" stroke-width="1.500"/></svg></div>
  </section>

  <section class="view flex-grow-1 overflow-hidden">
    <svg viewBox="427 113 725 459" preserveAspectRatio="xMinYMid slice" font-family="Roboto, sans-serif">
      <defs>
        <pattern id="fine" x="447" y="118" width="21" height="21" patternUnits="userSpaceOnUse"><path d="M.5 0v21M0 .5h21" stroke="#d9f3b9"/></pattern>
        <pattern id="major" x="447" y="160" width="105" height="105" patternUnits="userSpaceOnUse"><path d="M.5 0v105M0 .5h105" stroke="#cde6b0"/></pattern>
      </defs>
      <path d="M427 113h725v459H427z" fill="#e4ffc4"/>
      <path d="M447 118h694v442H447z" fill="url(#fine)"/>
      <path d="M447 118h694v442H447z" fill="url(#major)"/>
      <path d="M570.500 115.500h384v299h-76l-1 1H571V370l-.5-1z" fill="#f2c98d" fill-opacity=".55" stroke="#b3754a"/>
      <path d="M758.500 304h8v267h-8z" fill="#f2c98d" fill-opacity=".35"/>
      <path d="M750.500 304.500h8v111h-8zM766.500 304.500h8v111h-8z" fill="#f5b078" fill-opacity=".45" stroke="#b0622f"/>
      <path d="M758.500 415v157M766.500 415v157" stroke="#a9552c"/>
      <path d="M762 145v95" stroke="#6aa548" stroke-width="2"/><path d="M762 132l5 13h-10z" fill="#5f9a3c"/>
      <path d="M762 246v18" stroke="#115511" stroke-width="2"/><path d="M762 240l3 7h-6z" fill="#115511"/>
      <path d="M444 265.500h296" stroke="#4a4f9c" stroke-width="1.500"/><path d="M432 265.500l13-4v9z" fill="#2f35c8"/>
      <path d="M743 265.500h18" stroke="#101080" stroke-width="1.500"/><path d="M737 265.500l7-3v6z" fill="#101080"/>
      <text x="762" y="267" font-size="10" fill="#e11">Z</text>
      <circle cx="762" cy="265.500" r="4.500" fill="#e00"/>
      <text x="762" y="131" font-size="10" fill="#5f8a3c">X</text>
      <text x="428" y="266" font-size="9" fill="#3338b8">Y</text>
      <path d="M639.500 547.500h149v7h-149z" fill="#fff" stroke="#222"/><path d="M789 547h150v8H789z" fill="#000"/>
      <g font-size="10" fill="#222" text-anchor="middle" font-weight="500" font-family="Open Sans, sans-serif"><text x="639" y="568">0</text><text x="789" y="568">35</text><text x="951" y="568">70 (mm)</text></g>
    </svg>
  </section>
</main>

<section class="lower d-flex">
  <div class="msg flex-shrink-0"></div>
  <div class="pside flex-shrink-0"><div class="h-100 d-flex flex-column align-items-center">
    <button aria-label="Close progress"><svg width="8" height="8"><use href="#x"/></svg></button>
    <button aria-label="Collapse progress" class="mt-1"><svg width="6" height="6"><path d="M1 3l3-2v4z" fill="#111"/></svg></button>
    <span class="vtext mt-auto">Progress</span></div></div>
  <div class="prog flex-grow-1"></div>
</section>
<footer class="statusbar"></footer>

<svg class="flag" width="28" height="35" aria-hidden="true"><path d="M8 0h19l-2 9h-2l-5 26H0z" fill="#fdfb7a"/></svg>
<div class="keys">
<button class="md">ESC</button><button>F1</button><button>F2</button><button>F3</button><button>F4</button><button>F5</button><button>F6</button><button>F7</button><button>F8</button><button>F9</button><button>F10</button><button>F11</button><button>F12</button><button class="ar">←</button>
<button>~</button><button>1</button><button>2</button><button>3</button><button>4</button><button>5</button><button>6</button><button>7</button><button>8</button><button>9</button><button>0</button><button>-</button><button>=</button><button>\</button>
<button class="md">TAB</button><button>Q</button><button>W</button><button>E</button><button>R</button><button>T</button><button>Y</button><button>U</button><button>I</button><button>O</button><button>P</button><button>[</button><button>]</button><button class="xs">ENTER</button>
<button class="xs">CAPS</button><button>A</button><button>S</button><button>D</button><button>F</button><button>G</button><button>H</button><button>J</button><button>K</button><button>L</button><button>;</button><button>'</button><button class="ar">↑</button><button class="xs">SHIFT</button>
<button class="xs">SHIFT</button><button>Z</button><button>X</button><button>C</button><button>V</button><button>B</button><button>N</button><button>M</button><button>,</button><button>.</button><button>/</button><button class="ar">←</button><button class="ar">↓</button><button class="ar">→</button>
<button class="xs">CTRL</button><button class="xs">WIN</button><button class="xs">ALT</button><button class="space" aria-label="Space"></button><button class="xs">ALT</button><button class="xs">WIN</button><button class="xs">CTRL</button>
<span class="under">NUM</span>
</div>
<script src="https://cdn.jsdelivr.net/npm/bootstrap@5.3.0/dist/js/bootstrap.bundle.min.js"></script>
</body>
</html>
